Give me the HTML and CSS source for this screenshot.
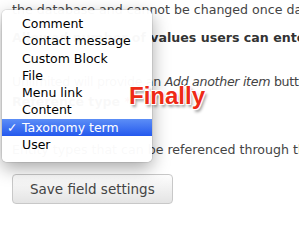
FILE: index.html
```html
<!DOCTYPE html>
<html lang="en">
<head>
  <meta charset="UTF-8">
  <title>Field settings</title>
  <link rel="stylesheet" href="styles.css">
</head>
<body>

  <!-- Page behind the dropdown -->
  <div class="page">
    <p class="desc">the database and cannot be changed once data has been created.</p>
    <p class="label">Allowed number of values users can enter</p>
    <div class="field-select"></div>
    <p class="desc tight">Unlimited will provide an <em>Add another item</em> button.</p>
    <p class="label short">Reference type <span class="req">*</span></p>
    <div class="field-select tall"></div>
    <p class="desc">Entity types that can be referenced through this field.</p>
    <button class="save-btn">Save field settings</button>
  </div>

  <!-- Open dropdown menu -->
  <ul class="menu">
    <li>Comment</li>
    <li>Contact message</li>
    <li>Custom Block</li>
    <li>File</li>
    <li>Menu link</li>
    <li>Content</li>
    <li class="selected"><span class="check">&#10003;</span>Taxonomy term</li>
    <li>User</li>
  </ul>

  <!-- Annotation -->
  <div class="note">Finally</div>

</body>
</html>
```

FILE: styles.css
```css
/* Global Styles */
body {
  margin: 0;
  padding: 0;
  background: #fff;
  font-family: "DejaVu Sans", Verdana, sans-serif;
  color: #444;
  width: 299px;
  height: 225px;
  overflow: hidden;
  position: relative;
}

.page {
  padding: 2px 0 0 12px;
}

.page p {
  margin: 0;
  font-size: 12.6px;
  line-height: 16px;
  white-space: nowrap;
}

.desc.tight {
  letter-spacing: -0.3px;
}

.label {
  font-weight: bold;
  color: #333;
  margin-top: 12px !important;
}

.label.short {
  margin-top: 4px !important;
}

.field-select {
  height: 28px;
}

.field-select.tall {
  height: 32px;
}

.req {
  color: #c00;
}

.save-btn {
  margin-top: 16px;
  padding: 0 17px;
  height: 30px;
  font-family: "DejaVu Sans", Verdana, sans-serif;
  font-size: 13.5px;
  color: #444;
  background: linear-gradient(#fdfdfd, #e4e4e4);
  border: 1px solid #c8c8c8;
  border-radius: 4px;
}

/* Dropdown */
.menu {
  position: absolute;
  top: 10px;
  left: 2px;
  width: 150px;
  margin: 0;
  padding: 5px 0 9px;
  list-style: none;
  background: rgba(255, 255, 255, 0.97);
  border-radius: 5px;
  box-shadow: 0 6px 18px rgba(0, 0, 0, 0.35), 0 0 0 1px rgba(0, 0, 0, 0.08);
  font-size: 12.5px;
  color: #000;
}

.menu li {
  height: 17.3px;
  line-height: 17px;
  padding-left: 20px;
  position: relative;
  white-space: nowrap;
}

.menu li.selected {
  background: linear-gradient(#5c8ef6, #2459ee);
  color: #fff;
}

.check {
  position: absolute;
  left: 5px;
  font-weight: bold;
}

/* Red annotation */
.note {
  position: absolute;
  top: 82px;
  left: 129px;
  font-family: "Liberation Sans", Arial, sans-serif;
  font-weight: bold;
  font-size: 24px;
  color: #ee2a16;
  text-shadow: -1px -1px 0 #fff, 1px -1px 0 #fff, -1px 1px 0 #fff, 1px 1px 0 #fff, 2px 3px 3px rgba(0, 0, 0, 0.4);
}
```
